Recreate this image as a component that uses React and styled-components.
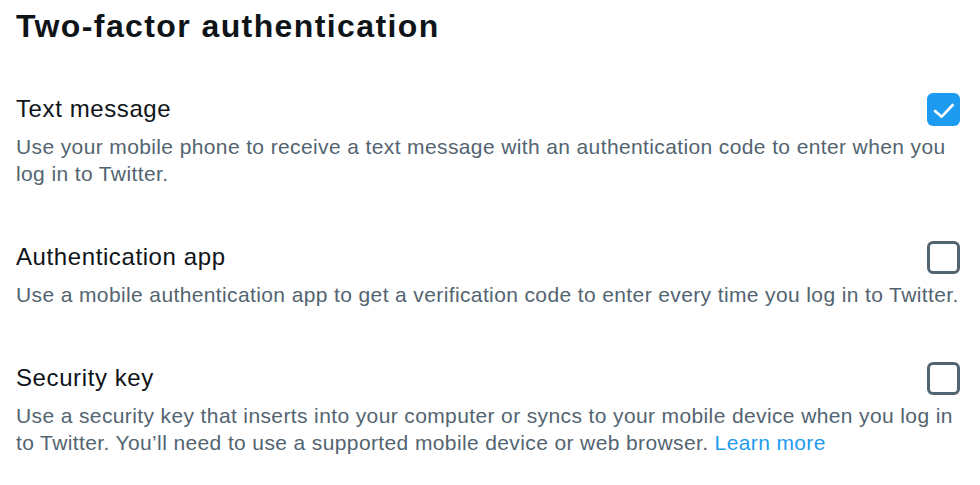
import React, { useState } from "react";
import styled, { createGlobalStyle } from "styled-components";

const GlobalStyle = createGlobalStyle`
  html, body {
    margin: 0;
    padding: 0;
    background: #ffffff;
  }
  body {
    font-family: "Liberation Sans", Arial, sans-serif;
    -webkit-font-smoothing: antialiased;
  }
`;

const Page = styled.div`
  width: 980px;
  height: 485px;
  box-sizing: border-box;
  padding: 6px 20px 0 16px;
  overflow: hidden;
`;

const Title = styled.h2`
  margin: 0 0 47px;
  font-size: 32px;
  line-height: 40px;
  font-weight: 700;
  letter-spacing: 1.4px;
  color: #0f1419;
`;

const Option = styled.div`
  margin-bottom: 54px;
`;

const OptionHead = styled.label`
  display: flex;
  align-items: flex-start;
  justify-content: space-between;
  cursor: pointer;
`;

const OptionName = styled.span`
  font-size: 24px;
  line-height: 32px;
  letter-spacing: 0.6px;
  color: #0f1419;
`;

const Description = styled.p`
  margin: 7px -6px 0 0;
  font-size: 21px;
  line-height: 27px;
  letter-spacing: 0.38px;
  color: #536471;
`;

const LearnMore = styled.a`
  color: #1d9bf0;
  text-decoration: none;
`;

const Box = styled.span`
  flex: none;
  width: 33px;
  height: 33px;
  box-sizing: border-box;
  border-radius: 6px;
  border: ${(p) => (p.checked ? "none" : "3px solid #536471")};
  background: ${(p) => (p.checked ? "#1d9bf0" : "transparent")};
  display: flex;
  align-items: center;
  justify-content: center;
`;

const Check = ({ checked, onClick }) => (
  <Box checked={checked} onClick={onClick}>
    {checked && (
      <svg width="33" height="33" viewBox="0 0 33 33" fill="none">
        <path
          d="M8 18l6.7 5.7L25.7 12"
          stroke="#ffffff"
          strokeWidth="2.6"
          strokeLinecap="round"
          strokeLinejoin="round"
        />
      </svg>
    )}
  </Box>
);

const options = [
  {
    id: "sms",
    name: "Text message",
    text: "Use your mobile phone to receive a text message with an authentication code to enter when you log in to Twitter.",
  },
  {
    id: "app",
    name: "Authentication app",
    text: "Use a mobile authentication app to get a verification code to enter every time you log in to Twitter.",
  },
  {
    id: "key",
    name: "Security key",
    text: "Use a security key that inserts into your computer or syncs to your mobile device when you log in to Twitter. You’ll need to use a supported mobile device or web browser.",
    link: true,
  },
];

export default function App() {
  const [selected, setSelected] = useState({ sms: true, app: false, key: false });

  return (
    <>
      <GlobalStyle />
      <Page>
        <Title>Two-factor authentication</Title>
        {options.map((o) => (
          <Option key={o.id}>
            <OptionHead>
              <OptionName>{o.name}</OptionName>
              <Check
                checked={selected[o.id]}
                onClick={() => setSelected({ ...selected, [o.id]: !selected[o.id] })}
              />
            </OptionHead>
            <Description>
              {o.text}
              {o.link && (
                <>
                  {" "}
                  <LearnMore href="#">Learn more</LearnMore>
                </>
              )}
            </Description>
          </Option>
        ))}
      </Page>
    </>
  );
}
